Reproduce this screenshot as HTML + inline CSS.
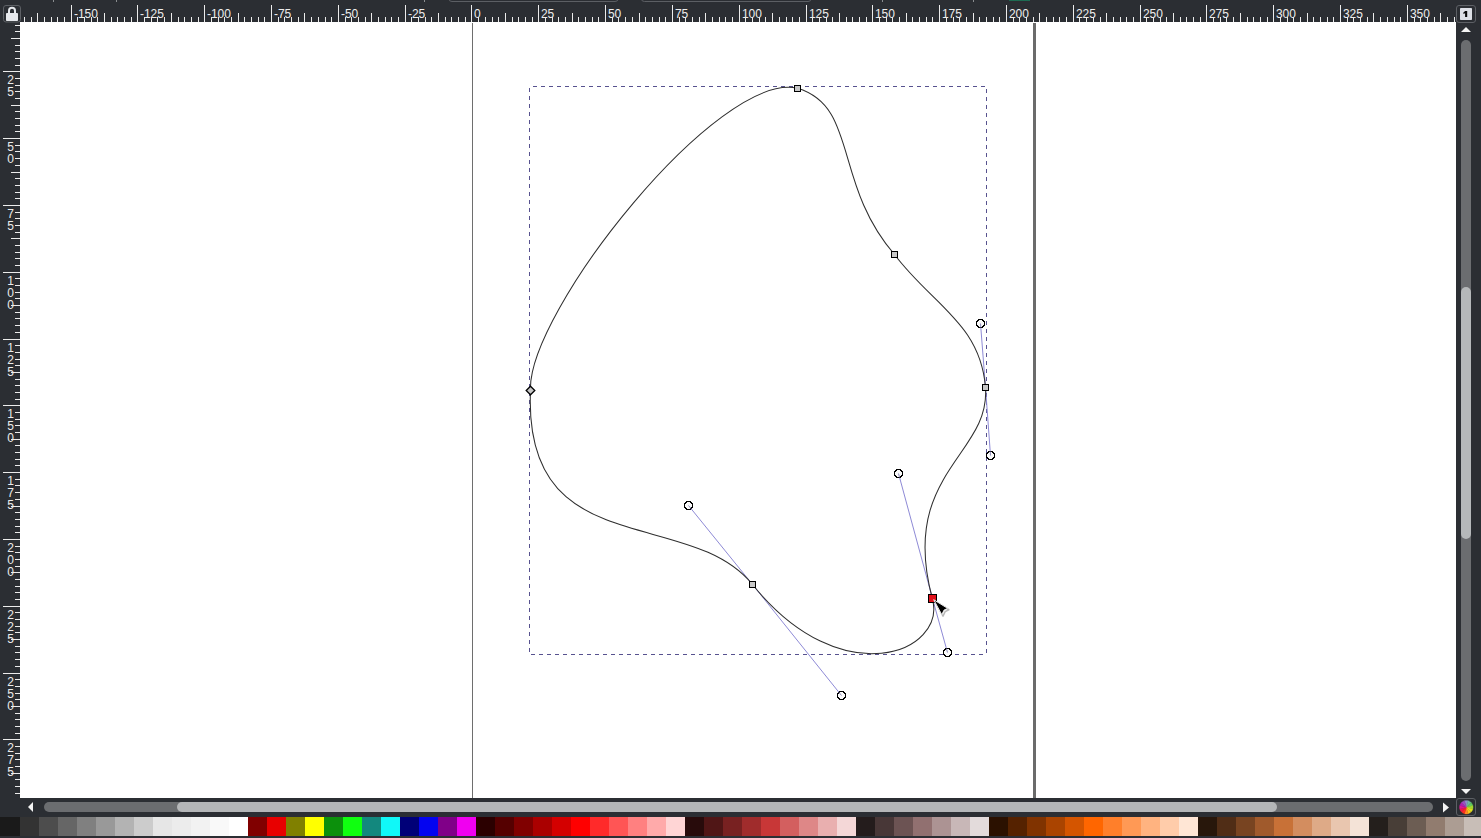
<!DOCTYPE html><html><head><meta charset="utf-8"><style>
html,body{margin:0;padding:0;width:1481px;height:838px;overflow:hidden;background:#2b2e33;}
svg{display:block;position:absolute;left:0;top:0;}
text{font-family:"Liberation Sans",sans-serif;}
</style></head><body>
<svg width="1481" height="838" viewBox="0 0 1481 838">
<rect x="0" y="0" width="1481" height="838" fill="#2b2e33"/>

<g fill="none" stroke="#5c5f64" stroke-width="1">
<path d="M449,-4 V-1 Q449,1.5 452,1.5 H615 Q618,1.5 618,-1 V-4"/>
<path d="M641.5,-4 V-1 Q641.5,1.5 644.5,1.5 H808 Q811,1.5 811,-1 V-4"/>
</g>
<g fill="#8a8d90" shape-rendering="crispEdges">
<rect x="53" y="0" width="1" height="2"/>
<rect x="116" y="0" width="1" height="2"/>
<rect x="424" y="0" width="1" height="2"/>
<rect x="882" y="0" width="1" height="2"/>
<rect x="973" y="0" width="1" height="2"/>
</g>
<rect x="1009" y="0" width="21" height="1" fill="#1d6b52"/>
<rect x="20" y="22" width="1436" height="776" fill="#ffffff"/>
<g fill="#ececec" shape-rendering="crispEdges">
<rect x="24" y="17" width="1" height="5"/>
<rect x="31" y="17" width="1" height="5"/>
<rect x="37" y="13" width="1" height="9"/>
<rect x="44" y="17" width="1" height="5"/>
<rect x="51" y="17" width="1" height="5"/>
<rect x="57" y="17" width="1" height="5"/>
<rect x="64" y="17" width="1" height="5"/>
<rect x="71" y="5" width="1" height="17"/>
<rect x="77" y="17" width="1" height="5"/>
<rect x="84" y="17" width="1" height="5"/>
<rect x="91" y="17" width="1" height="5"/>
<rect x="97" y="17" width="1" height="5"/>
<rect x="104" y="13" width="1" height="9"/>
<rect x="111" y="17" width="1" height="5"/>
<rect x="117" y="17" width="1" height="5"/>
<rect x="124" y="17" width="1" height="5"/>
<rect x="131" y="17" width="1" height="5"/>
<rect x="137" y="5" width="1" height="17"/>
<rect x="144" y="17" width="1" height="5"/>
<rect x="151" y="17" width="1" height="5"/>
<rect x="157" y="17" width="1" height="5"/>
<rect x="164" y="17" width="1" height="5"/>
<rect x="171" y="13" width="1" height="9"/>
<rect x="178" y="17" width="1" height="5"/>
<rect x="184" y="17" width="1" height="5"/>
<rect x="191" y="17" width="1" height="5"/>
<rect x="198" y="17" width="1" height="5"/>
<rect x="204" y="5" width="1" height="17"/>
<rect x="211" y="17" width="1" height="5"/>
<rect x="218" y="17" width="1" height="5"/>
<rect x="224" y="17" width="1" height="5"/>
<rect x="231" y="17" width="1" height="5"/>
<rect x="238" y="13" width="1" height="9"/>
<rect x="244" y="17" width="1" height="5"/>
<rect x="251" y="17" width="1" height="5"/>
<rect x="258" y="17" width="1" height="5"/>
<rect x="264" y="17" width="1" height="5"/>
<rect x="271" y="5" width="1" height="17"/>
<rect x="278" y="17" width="1" height="5"/>
<rect x="284" y="17" width="1" height="5"/>
<rect x="291" y="17" width="1" height="5"/>
<rect x="298" y="17" width="1" height="5"/>
<rect x="304" y="13" width="1" height="9"/>
<rect x="311" y="17" width="1" height="5"/>
<rect x="318" y="17" width="1" height="5"/>
<rect x="325" y="17" width="1" height="5"/>
<rect x="331" y="17" width="1" height="5"/>
<rect x="338" y="5" width="1" height="17"/>
<rect x="345" y="17" width="1" height="5"/>
<rect x="351" y="17" width="1" height="5"/>
<rect x="358" y="17" width="1" height="5"/>
<rect x="365" y="17" width="1" height="5"/>
<rect x="371" y="13" width="1" height="9"/>
<rect x="378" y="17" width="1" height="5"/>
<rect x="385" y="17" width="1" height="5"/>
<rect x="391" y="17" width="1" height="5"/>
<rect x="398" y="17" width="1" height="5"/>
<rect x="405" y="5" width="1" height="17"/>
<rect x="411" y="17" width="1" height="5"/>
<rect x="418" y="17" width="1" height="5"/>
<rect x="425" y="17" width="1" height="5"/>
<rect x="431" y="17" width="1" height="5"/>
<rect x="438" y="13" width="1" height="9"/>
<rect x="445" y="17" width="1" height="5"/>
<rect x="451" y="17" width="1" height="5"/>
<rect x="458" y="17" width="1" height="5"/>
<rect x="465" y="17" width="1" height="5"/>
<rect x="471" y="5" width="1" height="17"/>
<rect x="478" y="17" width="1" height="5"/>
<rect x="485" y="17" width="1" height="5"/>
<rect x="492" y="17" width="1" height="5"/>
<rect x="498" y="17" width="1" height="5"/>
<rect x="505" y="13" width="1" height="9"/>
<rect x="512" y="17" width="1" height="5"/>
<rect x="518" y="17" width="1" height="5"/>
<rect x="525" y="17" width="1" height="5"/>
<rect x="532" y="17" width="1" height="5"/>
<rect x="538" y="5" width="1" height="17"/>
<rect x="545" y="17" width="1" height="5"/>
<rect x="552" y="17" width="1" height="5"/>
<rect x="558" y="17" width="1" height="5"/>
<rect x="565" y="17" width="1" height="5"/>
<rect x="572" y="13" width="1" height="9"/>
<rect x="578" y="17" width="1" height="5"/>
<rect x="585" y="17" width="1" height="5"/>
<rect x="592" y="17" width="1" height="5"/>
<rect x="598" y="17" width="1" height="5"/>
<rect x="605" y="5" width="1" height="17"/>
<rect x="612" y="17" width="1" height="5"/>
<rect x="618" y="17" width="1" height="5"/>
<rect x="625" y="17" width="1" height="5"/>
<rect x="632" y="17" width="1" height="5"/>
<rect x="639" y="13" width="1" height="9"/>
<rect x="645" y="17" width="1" height="5"/>
<rect x="652" y="17" width="1" height="5"/>
<rect x="659" y="17" width="1" height="5"/>
<rect x="665" y="17" width="1" height="5"/>
<rect x="672" y="5" width="1" height="17"/>
<rect x="679" y="17" width="1" height="5"/>
<rect x="685" y="17" width="1" height="5"/>
<rect x="692" y="17" width="1" height="5"/>
<rect x="699" y="17" width="1" height="5"/>
<rect x="705" y="13" width="1" height="9"/>
<rect x="712" y="17" width="1" height="5"/>
<rect x="719" y="17" width="1" height="5"/>
<rect x="725" y="17" width="1" height="5"/>
<rect x="732" y="17" width="1" height="5"/>
<rect x="739" y="5" width="1" height="17"/>
<rect x="745" y="17" width="1" height="5"/>
<rect x="752" y="17" width="1" height="5"/>
<rect x="759" y="17" width="1" height="5"/>
<rect x="765" y="17" width="1" height="5"/>
<rect x="772" y="13" width="1" height="9"/>
<rect x="779" y="17" width="1" height="5"/>
<rect x="786" y="17" width="1" height="5"/>
<rect x="792" y="17" width="1" height="5"/>
<rect x="799" y="17" width="1" height="5"/>
<rect x="806" y="5" width="1" height="17"/>
<rect x="812" y="17" width="1" height="5"/>
<rect x="819" y="17" width="1" height="5"/>
<rect x="826" y="17" width="1" height="5"/>
<rect x="832" y="17" width="1" height="5"/>
<rect x="839" y="13" width="1" height="9"/>
<rect x="846" y="17" width="1" height="5"/>
<rect x="852" y="17" width="1" height="5"/>
<rect x="859" y="17" width="1" height="5"/>
<rect x="866" y="17" width="1" height="5"/>
<rect x="872" y="5" width="1" height="17"/>
<rect x="879" y="17" width="1" height="5"/>
<rect x="886" y="17" width="1" height="5"/>
<rect x="892" y="17" width="1" height="5"/>
<rect x="899" y="17" width="1" height="5"/>
<rect x="906" y="13" width="1" height="9"/>
<rect x="912" y="17" width="1" height="5"/>
<rect x="919" y="17" width="1" height="5"/>
<rect x="926" y="17" width="1" height="5"/>
<rect x="932" y="17" width="1" height="5"/>
<rect x="939" y="5" width="1" height="17"/>
<rect x="946" y="17" width="1" height="5"/>
<rect x="953" y="17" width="1" height="5"/>
<rect x="959" y="17" width="1" height="5"/>
<rect x="966" y="17" width="1" height="5"/>
<rect x="973" y="13" width="1" height="9"/>
<rect x="979" y="17" width="1" height="5"/>
<rect x="986" y="17" width="1" height="5"/>
<rect x="993" y="17" width="1" height="5"/>
<rect x="999" y="17" width="1" height="5"/>
<rect x="1006" y="5" width="1" height="17"/>
<rect x="1013" y="17" width="1" height="5"/>
<rect x="1019" y="17" width="1" height="5"/>
<rect x="1026" y="17" width="1" height="5"/>
<rect x="1033" y="17" width="1" height="5"/>
<rect x="1039" y="13" width="1" height="9"/>
<rect x="1046" y="17" width="1" height="5"/>
<rect x="1053" y="17" width="1" height="5"/>
<rect x="1059" y="17" width="1" height="5"/>
<rect x="1066" y="17" width="1" height="5"/>
<rect x="1073" y="5" width="1" height="17"/>
<rect x="1079" y="17" width="1" height="5"/>
<rect x="1086" y="17" width="1" height="5"/>
<rect x="1093" y="17" width="1" height="5"/>
<rect x="1100" y="17" width="1" height="5"/>
<rect x="1106" y="13" width="1" height="9"/>
<rect x="1113" y="17" width="1" height="5"/>
<rect x="1120" y="17" width="1" height="5"/>
<rect x="1126" y="17" width="1" height="5"/>
<rect x="1133" y="17" width="1" height="5"/>
<rect x="1140" y="5" width="1" height="17"/>
<rect x="1146" y="17" width="1" height="5"/>
<rect x="1153" y="17" width="1" height="5"/>
<rect x="1160" y="17" width="1" height="5"/>
<rect x="1166" y="17" width="1" height="5"/>
<rect x="1173" y="13" width="1" height="9"/>
<rect x="1180" y="17" width="1" height="5"/>
<rect x="1186" y="17" width="1" height="5"/>
<rect x="1193" y="17" width="1" height="5"/>
<rect x="1200" y="17" width="1" height="5"/>
<rect x="1206" y="5" width="1" height="17"/>
<rect x="1213" y="17" width="1" height="5"/>
<rect x="1220" y="17" width="1" height="5"/>
<rect x="1226" y="17" width="1" height="5"/>
<rect x="1233" y="17" width="1" height="5"/>
<rect x="1240" y="13" width="1" height="9"/>
<rect x="1247" y="17" width="1" height="5"/>
<rect x="1253" y="17" width="1" height="5"/>
<rect x="1260" y="17" width="1" height="5"/>
<rect x="1267" y="17" width="1" height="5"/>
<rect x="1273" y="5" width="1" height="17"/>
<rect x="1280" y="17" width="1" height="5"/>
<rect x="1287" y="17" width="1" height="5"/>
<rect x="1293" y="17" width="1" height="5"/>
<rect x="1300" y="17" width="1" height="5"/>
<rect x="1307" y="13" width="1" height="9"/>
<rect x="1313" y="17" width="1" height="5"/>
<rect x="1320" y="17" width="1" height="5"/>
<rect x="1327" y="17" width="1" height="5"/>
<rect x="1333" y="17" width="1" height="5"/>
<rect x="1340" y="5" width="1" height="17"/>
<rect x="1347" y="17" width="1" height="5"/>
<rect x="1353" y="17" width="1" height="5"/>
<rect x="1360" y="17" width="1" height="5"/>
<rect x="1367" y="17" width="1" height="5"/>
<rect x="1373" y="13" width="1" height="9"/>
<rect x="1380" y="17" width="1" height="5"/>
<rect x="1387" y="17" width="1" height="5"/>
<rect x="1394" y="17" width="1" height="5"/>
<rect x="1400" y="17" width="1" height="5"/>
<rect x="1407" y="5" width="1" height="17"/>
<rect x="1414" y="17" width="1" height="5"/>
<rect x="1420" y="17" width="1" height="5"/>
<rect x="1427" y="17" width="1" height="5"/>
<rect x="1434" y="17" width="1" height="5"/>
<rect x="1440" y="13" width="1" height="9"/>
<rect x="1447" y="17" width="1" height="5"/>
<rect x="1454" y="17" width="1" height="5"/>
<rect x="15" y="25" width="5" height="1"/>
<rect x="15" y="31" width="5" height="1"/>
<rect x="11" y="38" width="9" height="1"/>
<rect x="15" y="45" width="5" height="1"/>
<rect x="15" y="51" width="5" height="1"/>
<rect x="15" y="58" width="5" height="1"/>
<rect x="15" y="65" width="5" height="1"/>
<rect x="3" y="71" width="17" height="1"/>
<rect x="15" y="78" width="5" height="1"/>
<rect x="15" y="85" width="5" height="1"/>
<rect x="15" y="91" width="5" height="1"/>
<rect x="15" y="98" width="5" height="1"/>
<rect x="11" y="105" width="9" height="1"/>
<rect x="15" y="111" width="5" height="1"/>
<rect x="15" y="118" width="5" height="1"/>
<rect x="15" y="125" width="5" height="1"/>
<rect x="15" y="131" width="5" height="1"/>
<rect x="3" y="138" width="17" height="1"/>
<rect x="15" y="145" width="5" height="1"/>
<rect x="15" y="151" width="5" height="1"/>
<rect x="15" y="158" width="5" height="1"/>
<rect x="15" y="165" width="5" height="1"/>
<rect x="11" y="172" width="9" height="1"/>
<rect x="15" y="178" width="5" height="1"/>
<rect x="15" y="185" width="5" height="1"/>
<rect x="15" y="192" width="5" height="1"/>
<rect x="15" y="198" width="5" height="1"/>
<rect x="3" y="205" width="17" height="1"/>
<rect x="15" y="212" width="5" height="1"/>
<rect x="15" y="218" width="5" height="1"/>
<rect x="15" y="225" width="5" height="1"/>
<rect x="15" y="232" width="5" height="1"/>
<rect x="11" y="238" width="9" height="1"/>
<rect x="15" y="245" width="5" height="1"/>
<rect x="15" y="252" width="5" height="1"/>
<rect x="15" y="258" width="5" height="1"/>
<rect x="15" y="265" width="5" height="1"/>
<rect x="3" y="272" width="17" height="1"/>
<rect x="15" y="278" width="5" height="1"/>
<rect x="15" y="285" width="5" height="1"/>
<rect x="15" y="292" width="5" height="1"/>
<rect x="15" y="298" width="5" height="1"/>
<rect x="11" y="305" width="9" height="1"/>
<rect x="15" y="312" width="5" height="1"/>
<rect x="15" y="318" width="5" height="1"/>
<rect x="15" y="325" width="5" height="1"/>
<rect x="15" y="332" width="5" height="1"/>
<rect x="3" y="339" width="17" height="1"/>
<rect x="15" y="345" width="5" height="1"/>
<rect x="15" y="352" width="5" height="1"/>
<rect x="15" y="359" width="5" height="1"/>
<rect x="15" y="365" width="5" height="1"/>
<rect x="11" y="372" width="9" height="1"/>
<rect x="15" y="379" width="5" height="1"/>
<rect x="15" y="385" width="5" height="1"/>
<rect x="15" y="392" width="5" height="1"/>
<rect x="15" y="399" width="5" height="1"/>
<rect x="3" y="405" width="17" height="1"/>
<rect x="15" y="412" width="5" height="1"/>
<rect x="15" y="419" width="5" height="1"/>
<rect x="15" y="425" width="5" height="1"/>
<rect x="15" y="432" width="5" height="1"/>
<rect x="11" y="439" width="9" height="1"/>
<rect x="15" y="445" width="5" height="1"/>
<rect x="15" y="452" width="5" height="1"/>
<rect x="15" y="459" width="5" height="1"/>
<rect x="15" y="465" width="5" height="1"/>
<rect x="3" y="472" width="17" height="1"/>
<rect x="15" y="479" width="5" height="1"/>
<rect x="15" y="485" width="5" height="1"/>
<rect x="15" y="492" width="5" height="1"/>
<rect x="15" y="499" width="5" height="1"/>
<rect x="11" y="506" width="9" height="1"/>
<rect x="15" y="512" width="5" height="1"/>
<rect x="15" y="519" width="5" height="1"/>
<rect x="15" y="526" width="5" height="1"/>
<rect x="15" y="532" width="5" height="1"/>
<rect x="3" y="539" width="17" height="1"/>
<rect x="15" y="546" width="5" height="1"/>
<rect x="15" y="552" width="5" height="1"/>
<rect x="15" y="559" width="5" height="1"/>
<rect x="15" y="566" width="5" height="1"/>
<rect x="11" y="572" width="9" height="1"/>
<rect x="15" y="579" width="5" height="1"/>
<rect x="15" y="586" width="5" height="1"/>
<rect x="15" y="592" width="5" height="1"/>
<rect x="15" y="599" width="5" height="1"/>
<rect x="3" y="606" width="17" height="1"/>
<rect x="15" y="612" width="5" height="1"/>
<rect x="15" y="619" width="5" height="1"/>
<rect x="15" y="626" width="5" height="1"/>
<rect x="15" y="632" width="5" height="1"/>
<rect x="11" y="639" width="9" height="1"/>
<rect x="15" y="646" width="5" height="1"/>
<rect x="15" y="652" width="5" height="1"/>
<rect x="15" y="659" width="5" height="1"/>
<rect x="15" y="666" width="5" height="1"/>
<rect x="3" y="673" width="17" height="1"/>
<rect x="15" y="679" width="5" height="1"/>
<rect x="15" y="686" width="5" height="1"/>
<rect x="15" y="693" width="5" height="1"/>
<rect x="15" y="699" width="5" height="1"/>
<rect x="11" y="706" width="9" height="1"/>
<rect x="15" y="713" width="5" height="1"/>
<rect x="15" y="719" width="5" height="1"/>
<rect x="15" y="726" width="5" height="1"/>
<rect x="15" y="733" width="5" height="1"/>
<rect x="3" y="739" width="17" height="1"/>
<rect x="15" y="746" width="5" height="1"/>
<rect x="15" y="753" width="5" height="1"/>
<rect x="15" y="759" width="5" height="1"/>
<rect x="15" y="766" width="5" height="1"/>
<rect x="11" y="773" width="9" height="1"/>
<rect x="15" y="779" width="5" height="1"/>
<rect x="15" y="786" width="5" height="1"/>
<rect x="15" y="793" width="5" height="1"/>
</g>
<g fill="#ececec" font-size="12px">
<text x="73.9" y="18">-150</text>
<text x="139.9" y="18">-125</text>
<text x="206.9" y="18">-100</text>
<text x="273.9" y="18">-75</text>
<text x="340.9" y="18">-50</text>
<text x="407.9" y="18">-25</text>
<text x="473.9" y="18">0</text>
<text x="540.9" y="18">25</text>
<text x="607.9" y="18">50</text>
<text x="674.9" y="18">75</text>
<text x="741.9" y="18">100</text>
<text x="808.9" y="18">125</text>
<text x="874.9" y="18">150</text>
<text x="941.9" y="18">175</text>
<text x="1008.9" y="18">200</text>
<text x="1075.9" y="18">225</text>
<text x="1142.9" y="18">250</text>
<text x="1208.9" y="18">275</text>
<text x="1275.9" y="18">300</text>
<text x="1342.9" y="18">325</text>
<text x="1409.9" y="18">350</text>
</g>
<g fill="#ececec" font-size="12px" text-anchor="middle">
<text x="10.7" y="83.5">2</text>
<text x="10.7" y="95.7">5</text>
<text x="10.7" y="150.5">5</text>
<text x="10.7" y="162.7">0</text>
<text x="10.7" y="217.5">7</text>
<text x="10.7" y="229.7">5</text>
<text x="10.7" y="284.5">1</text>
<text x="10.7" y="296.7">0</text>
<text x="10.7" y="308.9">0</text>
<text x="10.7" y="351.5">1</text>
<text x="10.7" y="363.7">2</text>
<text x="10.7" y="375.9">5</text>
<text x="10.7" y="417.5">1</text>
<text x="10.7" y="429.7">5</text>
<text x="10.7" y="441.9">0</text>
<text x="10.7" y="484.5">1</text>
<text x="10.7" y="496.7">7</text>
<text x="10.7" y="508.9">5</text>
<text x="10.7" y="551.5">2</text>
<text x="10.7" y="563.7">0</text>
<text x="10.7" y="575.9">0</text>
<text x="10.7" y="618.5">2</text>
<text x="10.7" y="630.7">2</text>
<text x="10.7" y="642.9">5</text>
<text x="10.7" y="685.5">2</text>
<text x="10.7" y="697.7">5</text>
<text x="10.7" y="709.9">0</text>
<text x="10.7" y="751.5">2</text>
<text x="10.7" y="763.7">7</text>
<text x="10.7" y="775.9">5</text>
</g>
<rect x="3.5" y="5.5" width="17" height="16.5" rx="2.5" fill="none" stroke="#5d6065" stroke-width="1"/>
<rect x="6" y="13" width="12" height="8" rx="0.8" fill="#e6e8ec"/>
<path d="M9,13.5 V10.8 A3,3 0 0 1 15,10.8 V13.5" fill="none" stroke="#e6e8ec" stroke-width="2"/>
<rect x="1456.5" y="5.5" width="19" height="17" rx="2.5" fill="none" stroke="#5d6065" stroke-width="1"/>
<rect x="1460" y="8" width="12" height="12" rx="0.8" fill="#dde0e6"/>
<path d="M1463.4,12.4 L1465.2,11 H1467.2 V17 H1465.1 V13.2 L1463.4,14.1 Z" fill="#0a0a0a"/>
<g shape-rendering="crispEdges">
<rect x="472" y="23" width="1" height="775" fill="#6e6e6e"/>
<rect x="1033" y="23" width="3" height="775" fill="#6b6b6b"/>
</g>
<path d="M533,86h4v1h-4zM541,86h4v1h-4zM549,86h4v1h-4zM557,86h4v1h-4zM565,86h4v1h-4zM573,86h4v1h-4zM581,86h4v1h-4zM589,86h4v1h-4zM597,86h4v1h-4zM605,86h4v1h-4zM613,86h4v1h-4zM621,86h4v1h-4zM629,86h4v1h-4zM637,86h4v1h-4zM645,86h4v1h-4zM653,86h4v1h-4zM661,86h4v1h-4zM669,86h4v1h-4zM677,86h4v1h-4zM685,86h4v1h-4zM693,86h4v1h-4zM701,86h4v1h-4zM709,86h4v1h-4zM717,86h4v1h-4zM725,86h4v1h-4zM733,86h4v1h-4zM741,86h4v1h-4zM749,86h4v1h-4zM757,86h4v1h-4zM765,86h4v1h-4zM773,86h4v1h-4zM781,86h4v1h-4zM789,86h4v1h-4zM797,86h4v1h-4zM805,86h4v1h-4zM813,86h4v1h-4zM821,86h4v1h-4zM829,86h4v1h-4zM837,86h4v1h-4zM845,86h4v1h-4zM853,86h4v1h-4zM861,86h4v1h-4zM869,86h4v1h-4zM877,86h4v1h-4zM885,86h4v1h-4zM893,86h4v1h-4zM901,86h4v1h-4zM909,86h4v1h-4zM917,86h4v1h-4zM925,86h4v1h-4zM933,86h4v1h-4zM941,86h4v1h-4zM949,86h4v1h-4zM957,86h4v1h-4zM965,86h4v1h-4zM973,86h4v1h-4zM981,86h4v1h-4zM531,654h4v1h-4zM539,654h4v1h-4zM547,654h4v1h-4zM555,654h4v1h-4zM563,654h4v1h-4zM571,654h4v1h-4zM579,654h4v1h-4zM587,654h4v1h-4zM595,654h4v1h-4zM603,654h4v1h-4zM611,654h4v1h-4zM619,654h4v1h-4zM627,654h4v1h-4zM635,654h4v1h-4zM643,654h4v1h-4zM651,654h4v1h-4zM659,654h4v1h-4zM667,654h4v1h-4zM675,654h4v1h-4zM683,654h4v1h-4zM691,654h4v1h-4zM699,654h4v1h-4zM707,654h4v1h-4zM715,654h4v1h-4zM723,654h4v1h-4zM731,654h4v1h-4zM739,654h4v1h-4zM747,654h4v1h-4zM755,654h4v1h-4zM763,654h4v1h-4zM771,654h4v1h-4zM779,654h4v1h-4zM787,654h4v1h-4zM795,654h4v1h-4zM803,654h4v1h-4zM811,654h4v1h-4zM819,654h4v1h-4zM827,654h4v1h-4zM835,654h4v1h-4zM843,654h4v1h-4zM851,654h4v1h-4zM859,654h4v1h-4zM867,654h4v1h-4zM875,654h4v1h-4zM883,654h4v1h-4zM891,654h4v1h-4zM899,654h4v1h-4zM907,654h4v1h-4zM915,654h4v1h-4zM923,654h4v1h-4zM931,654h4v1h-4zM939,654h4v1h-4zM947,654h4v1h-4zM955,654h4v1h-4zM963,654h4v1h-4zM971,654h4v1h-4zM979,654h4v1h-4zM529,88h1v4h-1zM529,96h1v4h-1zM529,104h1v4h-1zM529,112h1v4h-1zM529,120h1v4h-1zM529,128h1v4h-1zM529,136h1v4h-1zM529,144h1v4h-1zM529,152h1v4h-1zM529,160h1v4h-1zM529,168h1v4h-1zM529,176h1v4h-1zM529,184h1v4h-1zM529,192h1v4h-1zM529,200h1v4h-1zM529,208h1v4h-1zM529,216h1v4h-1zM529,224h1v4h-1zM529,232h1v4h-1zM529,240h1v4h-1zM529,248h1v4h-1zM529,256h1v4h-1zM529,264h1v4h-1zM529,272h1v4h-1zM529,280h1v4h-1zM529,288h1v4h-1zM529,296h1v4h-1zM529,304h1v4h-1zM529,312h1v4h-1zM529,320h1v4h-1zM529,328h1v4h-1zM529,336h1v4h-1zM529,344h1v4h-1zM529,352h1v4h-1zM529,360h1v4h-1zM529,368h1v4h-1zM529,376h1v4h-1zM529,384h1v4h-1zM529,392h1v4h-1zM529,400h1v4h-1zM529,408h1v4h-1zM529,416h1v4h-1zM529,424h1v4h-1zM529,432h1v4h-1zM529,440h1v4h-1zM529,448h1v4h-1zM529,456h1v4h-1zM529,464h1v4h-1zM529,472h1v4h-1zM529,480h1v4h-1zM529,488h1v4h-1zM529,496h1v4h-1zM529,504h1v4h-1zM529,512h1v4h-1zM529,520h1v4h-1zM529,528h1v4h-1zM529,536h1v4h-1zM529,544h1v4h-1zM529,552h1v4h-1zM529,560h1v4h-1zM529,568h1v4h-1zM529,576h1v4h-1zM529,584h1v4h-1zM529,592h1v4h-1zM529,600h1v4h-1zM529,608h1v4h-1zM529,616h1v4h-1zM529,624h1v4h-1zM529,632h1v4h-1zM529,640h1v4h-1zM529,648h1v4h-1zM986,89h1v4h-1zM986,97h1v4h-1zM986,105h1v4h-1zM986,113h1v4h-1zM986,121h1v4h-1zM986,129h1v4h-1zM986,137h1v4h-1zM986,145h1v4h-1zM986,153h1v4h-1zM986,161h1v4h-1zM986,169h1v4h-1zM986,177h1v4h-1zM986,185h1v4h-1zM986,193h1v4h-1zM986,201h1v4h-1zM986,209h1v4h-1zM986,217h1v4h-1zM986,225h1v4h-1zM986,233h1v4h-1zM986,241h1v4h-1zM986,249h1v4h-1zM986,257h1v4h-1zM986,265h1v4h-1zM986,273h1v4h-1zM986,281h1v4h-1zM986,289h1v4h-1zM986,297h1v4h-1zM986,305h1v4h-1zM986,313h1v4h-1zM986,321h1v4h-1zM986,329h1v4h-1zM986,337h1v4h-1zM986,345h1v4h-1zM986,353h1v4h-1zM986,361h1v4h-1zM986,369h1v4h-1zM986,377h1v4h-1zM986,385h1v4h-1zM986,393h1v4h-1zM986,401h1v4h-1zM986,409h1v4h-1zM986,417h1v4h-1zM986,425h1v4h-1zM986,433h1v4h-1zM986,441h1v4h-1zM986,449h1v4h-1zM986,457h1v4h-1zM986,465h1v4h-1zM986,473h1v4h-1zM986,481h1v4h-1zM986,489h1v4h-1zM986,497h1v4h-1zM986,505h1v4h-1zM986,513h1v4h-1zM986,521h1v4h-1zM986,529h1v4h-1zM986,537h1v4h-1zM986,545h1v4h-1zM986,553h1v4h-1zM986,561h1v4h-1zM986,569h1v4h-1zM986,577h1v4h-1zM986,585h1v4h-1zM986,593h1v4h-1zM986,601h1v4h-1zM986,609h1v4h-1zM986,617h1v4h-1zM986,625h1v4h-1zM986,633h1v4h-1zM986,641h1v4h-1zM986,649h1v4h-1z" fill="#57528f" shape-rendering="crispEdges"/>
<g stroke="#8e8ad6" stroke-width="1" fill="none">
<path d="M980.5,323.5 L985.5,387.5"/>
<path d="M985.5,387.5 L990.5,455.5"/>
<path d="M898.5,473.5 L932.5,598.5"/>
<path d="M932.5,598.5 L947.5,652.5"/>
<path d="M688.5,505.5 L752.5,584.5"/>
<path d="M752.5,584.5 L841.5,695.5"/>
</g>
<path d="M530.5,390.4 C526.94,312.55 718.60,70.02 797.50,88.30 C858.41,106.49 832.87,183.17 894.50,254.50 C931.85,304.44 980.40,323.40 985.50,387.50 C990.60,455.30 898.90,473.30 932.30,598.50 C947.40,652.40 841.50,695.40 752.50,584.50 C688.30,505.50 522.71,563.87 530.50,390.40 Z" fill="none" stroke="#2e2e2e" stroke-width="1.04"/>
<g fill="#c8c8c8" stroke="#000" stroke-width="1" shape-rendering="crispEdges">
<rect x="794.5" y="85.5" width="6" height="6"/>
<rect x="891.5" y="251.5" width="6" height="6"/>
<rect x="982.5" y="384.5" width="6" height="6"/>
<rect x="749.5" y="581.5" width="6" height="6"/>
</g>
<path d="M530.5,386.2 L534.8,390.5 L530.5,394.8 L526.2,390.5 Z" fill="#c8c8c8" stroke="#000" stroke-width="1.3"/>
<path d="M979,320h1v1h-1zM980,320h1v1h-1zM981,320h1v1h-1zM978,321h1v1h-1zM979,321h1v1h-1zM980,321h1v1h-1zM981,321h1v1h-1zM982,321h1v1h-1zM977,322h1v1h-1zM978,322h1v1h-1zM979,322h1v1h-1zM980,322h1v1h-1zM981,322h1v1h-1zM982,322h1v1h-1zM983,322h1v1h-1zM977,323h1v1h-1zM978,323h1v1h-1zM979,323h1v1h-1zM980,323h1v1h-1zM981,323h1v1h-1zM982,323h1v1h-1zM983,323h1v1h-1zM977,324h1v1h-1zM978,324h1v1h-1zM979,324h1v1h-1zM980,324h1v1h-1zM981,324h1v1h-1zM982,324h1v1h-1zM983,324h1v1h-1zM978,325h1v1h-1zM979,325h1v1h-1zM980,325h1v1h-1zM981,325h1v1h-1zM982,325h1v1h-1zM979,326h1v1h-1zM980,326h1v1h-1zM981,326h1v1h-1zM989,452h1v1h-1zM990,452h1v1h-1zM991,452h1v1h-1zM988,453h1v1h-1zM989,453h1v1h-1zM990,453h1v1h-1zM991,453h1v1h-1zM992,453h1v1h-1zM987,454h1v1h-1zM988,454h1v1h-1zM989,454h1v1h-1zM990,454h1v1h-1zM991,454h1v1h-1zM992,454h1v1h-1zM993,454h1v1h-1zM987,455h1v1h-1zM988,455h1v1h-1zM989,455h1v1h-1zM990,455h1v1h-1zM991,455h1v1h-1zM992,455h1v1h-1zM993,455h1v1h-1zM987,456h1v1h-1zM988,456h1v1h-1zM989,456h1v1h-1zM990,456h1v1h-1zM991,456h1v1h-1zM992,456h1v1h-1zM993,456h1v1h-1zM988,457h1v1h-1zM989,457h1v1h-1zM990,457h1v1h-1zM991,457h1v1h-1zM992,457h1v1h-1zM989,458h1v1h-1zM990,458h1v1h-1zM991,458h1v1h-1zM897,470h1v1h-1zM898,470h1v1h-1zM899,470h1v1h-1zM896,471h1v1h-1zM897,471h1v1h-1zM898,471h1v1h-1zM899,471h1v1h-1zM900,471h1v1h-1zM895,472h1v1h-1zM896,472h1v1h-1zM897,472h1v1h-1zM898,472h1v1h-1zM899,472h1v1h-1zM900,472h1v1h-1zM901,472h1v1h-1zM895,473h1v1h-1zM896,473h1v1h-1zM897,473h1v1h-1zM898,473h1v1h-1zM899,473h1v1h-1zM900,473h1v1h-1zM901,473h1v1h-1zM895,474h1v1h-1zM896,474h1v1h-1zM897,474h1v1h-1zM898,474h1v1h-1zM899,474h1v1h-1zM900,474h1v1h-1zM901,474h1v1h-1zM896,475h1v1h-1zM897,475h1v1h-1zM898,475h1v1h-1zM899,475h1v1h-1zM900,475h1v1h-1zM897,476h1v1h-1zM898,476h1v1h-1zM899,476h1v1h-1zM946,649h1v1h-1zM947,649h1v1h-1zM948,649h1v1h-1zM945,650h1v1h-1zM946,650h1v1h-1zM947,650h1v1h-1zM948,650h1v1h-1zM949,650h1v1h-1zM944,651h1v1h-1zM945,651h1v1h-1zM946,651h1v1h-1zM947,651h1v1h-1zM948,651h1v1h-1zM949,651h1v1h-1zM950,651h1v1h-1zM944,652h1v1h-1zM945,652h1v1h-1zM946,652h1v1h-1zM947,652h1v1h-1zM948,652h1v1h-1zM949,652h1v1h-1zM950,652h1v1h-1zM944,653h1v1h-1zM945,653h1v1h-1zM946,653h1v1h-1zM947,653h1v1h-1zM948,653h1v1h-1zM949,653h1v1h-1zM950,653h1v1h-1zM945,654h1v1h-1zM946,654h1v1h-1zM947,654h1v1h-1zM948,654h1v1h-1zM949,654h1v1h-1zM946,655h1v1h-1zM947,655h1v1h-1zM948,655h1v1h-1zM687,502h1v1h-1zM688,502h1v1h-1zM689,502h1v1h-1zM686,503h1v1h-1zM687,503h1v1h-1zM688,503h1v1h-1zM689,503h1v1h-1zM690,503h1v1h-1zM685,504h1v1h-1zM686,504h1v1h-1zM687,504h1v1h-1zM688,504h1v1h-1zM689,504h1v1h-1zM690,504h1v1h-1zM691,504h1v1h-1zM685,505h1v1h-1zM686,505h1v1h-1zM687,505h1v1h-1zM688,505h1v1h-1zM689,505h1v1h-1zM690,505h1v1h-1zM691,505h1v1h-1zM685,506h1v1h-1zM686,506h1v1h-1zM687,506h1v1h-1zM688,506h1v1h-1zM689,506h1v1h-1zM690,506h1v1h-1zM691,506h1v1h-1zM686,507h1v1h-1zM687,507h1v1h-1zM688,507h1v1h-1zM689,507h1v1h-1zM690,507h1v1h-1zM687,508h1v1h-1zM688,508h1v1h-1zM689,508h1v1h-1zM840,692h1v1h-1zM841,692h1v1h-1zM842,692h1v1h-1zM839,693h1v1h-1zM840,693h1v1h-1zM841,693h1v1h-1zM842,693h1v1h-1zM843,693h1v1h-1zM838,694h1v1h-1zM839,694h1v1h-1zM840,694h1v1h-1zM841,694h1v1h-1zM842,694h1v1h-1zM843,694h1v1h-1zM844,694h1v1h-1zM838,695h1v1h-1zM839,695h1v1h-1zM840,695h1v1h-1zM841,695h1v1h-1zM842,695h1v1h-1zM843,695h1v1h-1zM844,695h1v1h-1zM838,696h1v1h-1zM839,696h1v1h-1zM840,696h1v1h-1zM841,696h1v1h-1zM842,696h1v1h-1zM843,696h1v1h-1zM844,696h1v1h-1zM839,697h1v1h-1zM840,697h1v1h-1zM841,697h1v1h-1zM842,697h1v1h-1zM843,697h1v1h-1zM840,698h1v1h-1zM841,698h1v1h-1zM842,698h1v1h-1z" fill="#fafafa" shape-rendering="crispEdges"/>
<path d="M978,319h1v1h-1zM979,319h1v1h-1zM980,319h1v1h-1zM981,319h1v1h-1zM982,319h1v1h-1zM977,320h1v1h-1zM978,320h1v1h-1zM982,320h1v1h-1zM983,320h1v1h-1zM976,321h1v1h-1zM977,321h1v1h-1zM983,321h1v1h-1zM984,321h1v1h-1zM976,322h1v1h-1zM984,322h1v1h-1zM976,323h1v1h-1zM984,323h1v1h-1zM976,324h1v1h-1zM984,324h1v1h-1zM976,325h1v1h-1zM977,325h1v1h-1zM983,325h1v1h-1zM984,325h1v1h-1zM977,326h1v1h-1zM978,326h1v1h-1zM982,326h1v1h-1zM983,326h1v1h-1zM978,327h1v1h-1zM979,327h1v1h-1zM980,327h1v1h-1zM981,327h1v1h-1zM982,327h1v1h-1zM988,451h1v1h-1zM989,451h1v1h-1zM990,451h1v1h-1zM991,451h1v1h-1zM992,451h1v1h-1zM987,452h1v1h-1zM988,452h1v1h-1zM992,452h1v1h-1zM993,452h1v1h-1zM986,453h1v1h-1zM987,453h1v1h-1zM993,453h1v1h-1zM994,453h1v1h-1zM986,454h1v1h-1zM994,454h1v1h-1zM986,455h1v1h-1zM994,455h1v1h-1zM986,456h1v1h-1zM994,456h1v1h-1zM986,457h1v1h-1zM987,457h1v1h-1zM993,457h1v1h-1zM994,457h1v1h-1zM987,458h1v1h-1zM988,458h1v1h-1zM992,458h1v1h-1zM993,458h1v1h-1zM988,459h1v1h-1zM989,459h1v1h-1zM990,459h1v1h-1zM991,459h1v1h-1zM992,459h1v1h-1zM896,469h1v1h-1zM897,469h1v1h-1zM898,469h1v1h-1zM899,469h1v1h-1zM900,469h1v1h-1zM895,470h1v1h-1zM896,470h1v1h-1zM900,470h1v1h-1zM901,470h1v1h-1zM894,471h1v1h-1zM895,471h1v1h-1zM901,471h1v1h-1zM902,471h1v1h-1zM894,472h1v1h-1zM902,472h1v1h-1zM894,473h1v1h-1zM902,473h1v1h-1zM894,474h1v1h-1zM902,474h1v1h-1zM894,475h1v1h-1zM895,475h1v1h-1zM901,475h1v1h-1zM902,475h1v1h-1zM895,476h1v1h-1zM896,476h1v1h-1zM900,476h1v1h-1zM901,476h1v1h-1zM896,477h1v1h-1zM897,477h1v1h-1zM898,477h1v1h-1zM899,477h1v1h-1zM900,477h1v1h-1zM945,648h1v1h-1zM946,648h1v1h-1zM947,648h1v1h-1zM948,648h1v1h-1zM949,648h1v1h-1zM944,649h1v1h-1zM945,649h1v1h-1zM949,649h1v1h-1zM950,649h1v1h-1zM943,650h1v1h-1zM944,650h1v1h-1zM950,650h1v1h-1zM951,650h1v1h-1zM943,651h1v1h-1zM951,651h1v1h-1zM943,652h1v1h-1zM951,652h1v1h-1zM943,653h1v1h-1zM951,653h1v1h-1zM943,654h1v1h-1zM944,654h1v1h-1zM950,654h1v1h-1zM951,654h1v1h-1zM944,655h1v1h-1zM945,655h1v1h-1zM949,655h1v1h-1zM950,655h1v1h-1zM945,656h1v1h-1zM946,656h1v1h-1zM947,656h1v1h-1zM948,656h1v1h-1zM949,656h1v1h-1zM686,501h1v1h-1zM687,501h1v1h-1zM688,501h1v1h-1zM689,501h1v1h-1zM690,501h1v1h-1zM685,502h1v1h-1zM686,502h1v1h-1zM690,502h1v1h-1zM691,502h1v1h-1zM684,503h1v1h-1zM685,503h1v1h-1zM691,503h1v1h-1zM692,503h1v1h-1zM684,504h1v1h-1zM692,504h1v1h-1zM684,505h1v1h-1zM692,505h1v1h-1zM684,506h1v1h-1zM692,506h1v1h-1zM684,507h1v1h-1zM685,507h1v1h-1zM691,507h1v1h-1zM692,507h1v1h-1zM685,508h1v1h-1zM686,508h1v1h-1zM690,508h1v1h-1zM691,508h1v1h-1zM686,509h1v1h-1zM687,509h1v1h-1zM688,509h1v1h-1zM689,509h1v1h-1zM690,509h1v1h-1zM839,691h1v1h-1zM840,691h1v1h-1zM841,691h1v1h-1zM842,691h1v1h-1zM843,691h1v1h-1zM838,692h1v1h-1zM839,692h1v1h-1zM843,692h1v1h-1zM844,692h1v1h-1zM837,693h1v1h-1zM838,693h1v1h-1zM844,693h1v1h-1zM845,693h1v1h-1zM837,694h1v1h-1zM845,694h1v1h-1zM837,695h1v1h-1zM845,695h1v1h-1zM837,696h1v1h-1zM845,696h1v1h-1zM837,697h1v1h-1zM838,697h1v1h-1zM844,697h1v1h-1zM845,697h1v1h-1zM838,698h1v1h-1zM839,698h1v1h-1zM843,698h1v1h-1zM844,698h1v1h-1zM839,699h1v1h-1zM840,699h1v1h-1zM841,699h1v1h-1zM842,699h1v1h-1zM843,699h1v1h-1z" fill="#000" shape-rendering="crispEdges"/>
<g stroke="#8a88b8" stroke-width="1">
<path d="M980.5,323.5 L980.81,327.49"/>
<path d="M990.5,455.5 L990.21,451.51"/>
<path d="M898.5,473.5 L899.55,477.36"/>
<path d="M947.5,652.5 L946.43,648.65"/>
<path d="M688.5,505.5 L691.02,508.61"/>
<path d="M841.5,695.5 L839.00,692.38"/>
</g>
<rect x="928.5" y="594.5" width="8" height="8" fill="#e0101a" stroke="#000" stroke-width="1" shape-rendering="crispEdges"/>
<polygon points="934.90,601.10 948.83,609.74 945.16,611.58 943.00,616.11" fill="none" stroke="#a0a0a0" stroke-width="1.5" stroke-linejoin="round" opacity="0.75"/>
<polygon points="933.70,599.70 947.63,608.34 943.96,610.18 941.80,614.71" fill="#000" stroke="#eeeeee" stroke-width="1" stroke-linejoin="round"/>
<path d="M1466,27 L1471,32 L1461,32 Z" fill="#f4f4f4"/>
<rect x="1461" y="40" width="10" height="741" rx="5" fill="#6b6d70"/>
<rect x="1461" y="287" width="10" height="252" rx="5" fill="#b5b8ba"/>
<path d="M1461,789 L1471,789 L1466,794 Z" fill="#f4f4f4"/>
<path d="M28,807 L33,802 L33,812 Z" fill="#f4f4f4"/>
<rect x="44" y="802" width="1389" height="10" rx="5" fill="#6b6d70"/>
<rect x="177" y="802" width="1100" height="10" rx="5" fill="#b4b6b8"/>
<path d="M1449,807.5 L1443,802.5 L1443,812.5 Z" fill="#f4f4f4"/>
<rect x="1456.5" y="798.5" width="19" height="17" rx="2.5" fill="none" stroke="#5d6065" stroke-width="1"/>
<path d="M1466.3,807.2 L1464.54,800.63 A6.8,6.8 0 0 1 1468.06,800.63 Z" fill="#8a8fc8" stroke="#8a8fc8" stroke-width="0.3"/>
<path d="M1466.3,807.2 L1468.06,800.63 A6.8,6.8 0 0 1 1471.11,802.39 Z" fill="#70b8a0" stroke="#70b8a0" stroke-width="0.3"/>
<path d="M1466.3,807.2 L1471.11,802.39 A6.8,6.8 0 0 1 1472.87,805.44 Z" fill="#60c860" stroke="#60c860" stroke-width="0.3"/>
<path d="M1466.3,807.2 L1472.87,805.44 A6.8,6.8 0 0 1 1472.87,808.96 Z" fill="#a0d830" stroke="#a0d830" stroke-width="0.3"/>
<path d="M1466.3,807.2 L1472.87,808.96 A6.8,6.8 0 0 1 1471.11,812.01 Z" fill="#d8e020" stroke="#d8e020" stroke-width="0.3"/>
<path d="M1466.3,807.2 L1471.11,812.01 A6.8,6.8 0 0 1 1468.06,813.77 Z" fill="#f8c818" stroke="#f8c818" stroke-width="0.3"/>
<path d="M1466.3,807.2 L1468.06,813.77 A6.8,6.8 0 0 1 1464.54,813.77 Z" fill="#ff8a20" stroke="#ff8a20" stroke-width="0.3"/>
<path d="M1466.3,807.2 L1464.54,813.77 A6.8,6.8 0 0 1 1461.49,812.01 Z" fill="#ff3020" stroke="#ff3020" stroke-width="0.3"/>
<path d="M1466.3,807.2 L1461.49,812.01 A6.8,6.8 0 0 1 1459.73,808.96 Z" fill="#f01848" stroke="#f01848" stroke-width="0.3"/>
<path d="M1466.3,807.2 L1459.73,808.96 A6.8,6.8 0 0 1 1459.73,805.44 Z" fill="#e01890" stroke="#e01890" stroke-width="0.3"/>
<path d="M1466.3,807.2 L1459.73,805.44 A6.8,6.8 0 0 1 1461.49,802.39 Z" fill="#b020b0" stroke="#b020b0" stroke-width="0.3"/>
<path d="M1466.3,807.2 L1461.49,802.39 A6.8,6.8 0 0 1 1464.54,800.63 Z" fill="#9a50c0" stroke="#9a50c0" stroke-width="0.3"/>
<g shape-rendering="crispEdges">
<rect x="0" y="817" width="20" height="19" fill="#1a1a1a"/>
<rect x="20" y="817" width="19" height="19" fill="#333333"/>
<rect x="39" y="817" width="19" height="19" fill="#4d4d4d"/>
<rect x="58" y="817" width="19" height="19" fill="#666666"/>
<rect x="77" y="817" width="19" height="19" fill="#808080"/>
<rect x="96" y="817" width="19" height="19" fill="#999999"/>
<rect x="115" y="817" width="19" height="19" fill="#b3b3b3"/>
<rect x="134" y="817" width="19" height="19" fill="#cccccc"/>
<rect x="153" y="817" width="19" height="19" fill="#e6e6e6"/>
<rect x="172" y="817" width="19" height="19" fill="#ececec"/>
<rect x="191" y="817" width="19" height="19" fill="#f2f2f2"/>
<rect x="210" y="817" width="19" height="19" fill="#f9f9f9"/>
<rect x="229" y="817" width="19" height="19" fill="#ffffff"/>
<rect x="248" y="817" width="19" height="19" fill="#800000"/>
<rect x="267" y="817" width="19" height="19" fill="#e80000"/>
<rect x="286" y="817" width="19" height="19" fill="#808000"/>
<rect x="305" y="817" width="19" height="19" fill="#ffff00"/>
<rect x="324" y="817" width="19" height="19" fill="#0c900c"/>
<rect x="343" y="817" width="19" height="19" fill="#10ff10"/>
<rect x="362" y="817" width="19" height="19" fill="#13887e"/>
<rect x="381" y="817" width="19" height="19" fill="#10f8f8"/>
<rect x="400" y="817" width="19" height="19" fill="#000078"/>
<rect x="419" y="817" width="19" height="19" fill="#0404f0"/>
<rect x="438" y="817" width="19" height="19" fill="#800088"/>
<rect x="457" y="817" width="19" height="19" fill="#f000f0"/>
<rect x="476" y="817" width="19" height="19" fill="#2b0000"/>
<rect x="495" y="817" width="19" height="19" fill="#550000"/>
<rect x="514" y="817" width="19" height="19" fill="#800000"/>
<rect x="533" y="817" width="19" height="19" fill="#aa0000"/>
<rect x="552" y="817" width="19" height="19" fill="#d40000"/>
<rect x="571" y="817" width="19" height="19" fill="#ff0000"/>
<rect x="590" y="817" width="19" height="19" fill="#ff2a2a"/>
<rect x="609" y="817" width="19" height="19" fill="#ff5555"/>
<rect x="628" y="817" width="19" height="19" fill="#ff8080"/>
<rect x="647" y="817" width="19" height="19" fill="#ffaaaa"/>
<rect x="666" y="817" width="19" height="19" fill="#ffd5d5"/>
<rect x="685" y="817" width="19" height="19" fill="#280b0b"/>
<rect x="704" y="817" width="19" height="19" fill="#501616"/>
<rect x="723" y="817" width="19" height="19" fill="#782121"/>
<rect x="742" y="817" width="19" height="19" fill="#a02c2c"/>
<rect x="761" y="817" width="19" height="19" fill="#c83737"/>
<rect x="780" y="817" width="19" height="19" fill="#d35f5f"/>
<rect x="799" y="817" width="19" height="19" fill="#de8787"/>
<rect x="818" y="817" width="19" height="19" fill="#e9afaf"/>
<rect x="837" y="817" width="19" height="19" fill="#f4d7d7"/>
<rect x="856" y="817" width="19" height="19" fill="#241c1c"/>
<rect x="875" y="817" width="19" height="19" fill="#483737"/>
<rect x="894" y="817" width="19" height="19" fill="#6c5353"/>
<rect x="913" y="817" width="19" height="19" fill="#917070"/>
<rect x="932" y="817" width="19" height="19" fill="#ac9393"/>
<rect x="951" y="817" width="19" height="19" fill="#c8b7b7"/>
<rect x="970" y="817" width="19" height="19" fill="#e3dbdb"/>
<rect x="989" y="817" width="19" height="19" fill="#2b1100"/>
<rect x="1008" y="817" width="19" height="19" fill="#552200"/>
<rect x="1027" y="817" width="19" height="19" fill="#803300"/>
<rect x="1046" y="817" width="19" height="19" fill="#aa4400"/>
<rect x="1065" y="817" width="19" height="19" fill="#d45500"/>
<rect x="1084" y="817" width="19" height="19" fill="#ff6600"/>
<rect x="1103" y="817" width="19" height="19" fill="#ff7f2a"/>
<rect x="1122" y="817" width="19" height="19" fill="#ff9955"/>
<rect x="1141" y="817" width="19" height="19" fill="#ffb380"/>
<rect x="1160" y="817" width="19" height="19" fill="#ffccaa"/>
<rect x="1179" y="817" width="19" height="19" fill="#ffe6d5"/>
<rect x="1198" y="817" width="19" height="19" fill="#28170b"/>
<rect x="1217" y="817" width="19" height="19" fill="#502d16"/>
<rect x="1236" y="817" width="19" height="19" fill="#784421"/>
<rect x="1255" y="817" width="19" height="19" fill="#a05a2c"/>
<rect x="1274" y="817" width="19" height="19" fill="#c87137"/>
<rect x="1293" y="817" width="19" height="19" fill="#d38d5f"/>
<rect x="1312" y="817" width="19" height="19" fill="#deaa87"/>
<rect x="1331" y="817" width="19" height="19" fill="#e9c6af"/>
<rect x="1350" y="817" width="19" height="19" fill="#f4e3d7"/>
<rect x="1369" y="817" width="19" height="19" fill="#241f1c"/>
<rect x="1388" y="817" width="19" height="19" fill="#483e37"/>
<rect x="1407" y="817" width="19" height="19" fill="#6c5d53"/>
<rect x="1426" y="817" width="19" height="19" fill="#917c6f"/>
<rect x="1445" y="817" width="19" height="19" fill="#ac9d93"/>
<rect x="1464" y="817" width="19" height="19" fill="#c8beb7"/>
</g>
</svg></body></html>
